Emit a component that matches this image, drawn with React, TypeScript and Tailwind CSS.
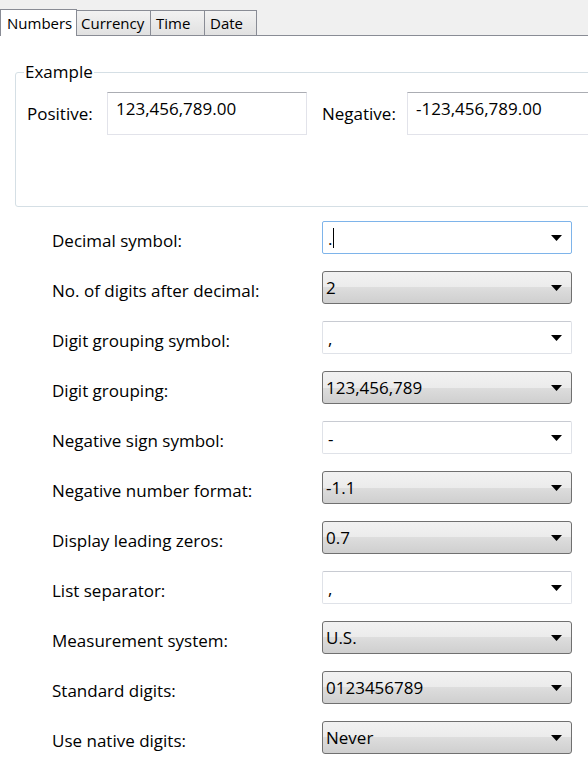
import React from "react";

type Row = { label: string; value: string; editable: boolean; focused?: boolean };

const rows: Row[] = [
  { label: "Decimal symbol:", value: ".", editable: true, focused: true },
  { label: "No. of digits after decimal:", value: "2", editable: false },
  { label: "Digit grouping symbol:", value: ",", editable: true },
  { label: "Digit grouping:", value: "123,456,789", editable: false },
  { label: "Negative sign symbol:", value: "-", editable: true },
  { label: "Negative number format:", value: "-1.1", editable: false },
  { label: "Display leading zeros:", value: "0.7", editable: false },
  { label: "List separator:", value: ",", editable: true },
  { label: "Measurement system:", value: "U.S.", editable: false },
  { label: "Standard digits:", value: "0123456789", editable: false },
  { label: "Use native digits:", value: "Never", editable: false },
];

function Arrow() {
  return (
    <svg width="11" height="6" viewBox="0 0 11 6" className="shrink-0">
      <path d="M0 0 H11 L5.5 6 Z" fill="#000" />
    </svg>
  );
}

function Combo({ row }: { row: Row }) {
  if (row.editable) {
    return (
      <div
        className={
          "flex h-[33px] w-[250px] items-center justify-between rounded-[2px] border bg-white pl-[5px] pr-[9px] " +
          (row.focused ? "border-[#7eb4ea]" : "border-[#dfe2e8] border-t-[#c8cbd2]")
        }
      >
        <span className="flex items-center">
          <span className="pt-[2px]">{row.value}</span>
          {row.focused && <span className="ml-[1px] inline-block h-[20px] w-px bg-black" />}
        </span>
        <Arrow />
      </div>
    );
  }
  return (
    <div className="flex h-[33px] w-[250px] items-center justify-between rounded-[3px] border border-[#707070] bg-[linear-gradient(to_bottom,#f2f2f2_0%,#ebebeb_50%,#dddddd_50%,#cfcfcf_100%)] pl-[3px] pr-[9px]">
      <span>{row.value}</span>
      <Arrow />
    </div>
  );
}

export default function App() {
  return (
    <div
      className="relative h-[762px] w-[588px] overflow-hidden bg-white text-[17px] text-black"
      style={{ fontFamily: '"Open Sans", "Noto Sans", sans-serif' }}
    >
      {/* Tab strip */}
      <div className="flex h-[36px] items-end border-b border-[#898c95] bg-[#f0f0f0] text-[15px]">
        <div className="relative z-10 -mb-px flex h-[27px] w-[77px] items-center border border-b-0 border-[#898c95] bg-white pl-[6px] leading-none">
          Numbers
        </div>
        <div className="flex h-[25px] w-[74px] items-center border border-b-0 border-l-0 border-[#898c95] bg-[linear-gradient(to_bottom,#f2f2f2,#e1e1e1)] pl-[4px] leading-none">
          Currency
        </div>
        <div className="flex h-[25px] w-[54px] items-center border border-b-0 border-l-0 border-[#898c95] bg-[linear-gradient(to_bottom,#f2f2f2,#e1e1e1)] pl-[5px] leading-none">
          Time
        </div>
        <div className="flex h-[25px] w-[52px] items-center border border-b-0 border-l-0 border-[#898c95] bg-[linear-gradient(to_bottom,#f2f2f2,#e1e1e1)] pl-[5px] leading-none">
          Date
        </div>
      </div>

      {/* Example group */}
      <fieldset className="ml-[15px] mt-[25px] h-[146px] w-[620px] rounded-[3px] border border-[#d5dfe5] pl-[8px]">
        <legend className="px-[1px] leading-[22px]">Example</legend>
        <div className="mt-[9px] flex items-start">
          <span className="ml-[3px] mt-[9px] w-[80px]">Positive:</span>
          <div className="h-[43px] w-[200px] border border-[#e2e3ea] border-t-[#abadb3] pl-[8px] pt-[3px]">
            123,456,789.00
          </div>
          <span className="ml-[15px] mt-[9px] w-[85px]">Negative:</span>
          <div className="h-[43px] w-[200px] border border-[#e2e3ea] border-t-[#abadb3] pl-[8px] pt-[3px]">
            -123,456,789.00
          </div>
        </div>
      </fieldset>

      {/* Settings rows */}
      <div className="mt-[14px] flex flex-col gap-[17px]">
        {rows.map((r) => (
          <div key={r.label} className="flex items-start">
            <span className="ml-[52px] mt-[7px] w-[270px]">{r.label}</span>
            <Combo row={r} />
          </div>
        ))}
      </div>
    </div>
  );
}
